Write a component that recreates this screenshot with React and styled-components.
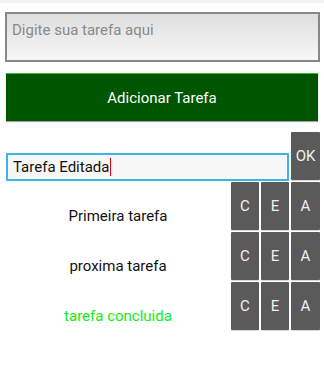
import React from 'react';
import styled, { createGlobalStyle } from 'styled-components';

const GlobalStyle = createGlobalStyle`
  html, body {
    margin: 0;
    padding: 0;
    background: #ffffff;
  }
  body {
    font-family: Roboto, "Liberation Sans", sans-serif;
  }
`;

const Screen = styled.div`
  width: 324px;
  height: 391px;
  overflow: hidden;
  border-top: 3px solid #f2f2f2;
  box-sizing: border-box;
`;

const Content = styled.div`
  display: flex;
  flex-direction: column;
  padding: 9px 4px 0 5px;
`;

const TaskInput = styled.div`
  height: 50px;
  box-sizing: border-box;
  border: 2px solid #878787;
  background: linear-gradient(#dedede, #f7f7f7);
  color: #8a8a8a;
  font-size: 15px;
  padding: 7px 5px 0 5px;
`;

const AddButton = styled.button`
  margin: 11px 2px 0 1px;
  height: 48px;
  border: none;
  border-top: 1px solid #2fbf2f;
  background: #005500;
  color: #ffffff;
  font-family: inherit;
  font-size: 15px;
  box-shadow: 0 1px 1px rgba(0, 0, 0, 0.35);
`;

const EditRow = styled.div`
  display: flex;
  align-items: flex-end;
  gap: 2px;
  margin-top: 11px;
  padding-left: 1px;
`;

const EditField = styled.div`
  flex: 1;
  height: 28px;
  box-sizing: border-box;
  border: 2px solid #3cb4e4;
  background: #f7f7f7;
  color: #111111;
  font-size: 15px;
  display: flex;
  align-items: center;
  padding-left: 5px;
  margin-bottom: -1px;
`;

const Caret = styled.span`
  display: inline-block;
  width: 1px;
  height: 18px;
  background: #e00000;
  margin-left: 1px;
`;

const TaskRow = styled.div`
  display: flex;
  align-items: flex-start;
  height: 50px;
  margin-top: ${p => (p.$first ? '2px' : '0')};
`;

const Label = styled.div`
  flex: 1;
  text-align: center;
  font-size: 15px;
  line-height: 20px;
  padding-top: 24px;
  color: ${p => (p.$done ? '#11ee11' : '#111111')};
`;

const Actions = styled.div`
  display: flex;
  gap: 2px;
`;

const Square = styled.button`
  width: ${p => p.$w || 28}px;
  height: 48px;
  padding: 0;
  border: none;
  border-radius: 1px;
  background: #5a5a5a;
  color: #f0f0f0;
  font-family: inherit;
  font-size: 15px;
  box-shadow: 0 1px 0 #d8d8d8;
`;

const tasks = [
  { text: 'Primeira tarefa', done: false },
  { text: 'proxima tarefa', done: false },
  { text: 'tarefa concluida', done: true },
];

export default function App() {
  return (
    <>
      <GlobalStyle />
      <Screen>
        <Content>
          <TaskInput>Digite sua tarefa aqui</TaskInput>
          <AddButton>Adicionar Tarefa</AddButton>
          <EditRow>
            <EditField>
              Tarefa Editada<Caret />
            </EditField>
            <Square $w={29}>OK</Square>
          </EditRow>
          {tasks.map((t, i) => (
            <TaskRow key={t.text} $first={i === 0}>
              <Label $done={t.done}>{t.text}</Label>
              <Actions>
                <Square>C</Square>
                <Square>E</Square>
                <Square $w={29}>A</Square>
              </Actions>
            </TaskRow>
          ))}
        </Content>
      </Screen>
    </>
  );
}
